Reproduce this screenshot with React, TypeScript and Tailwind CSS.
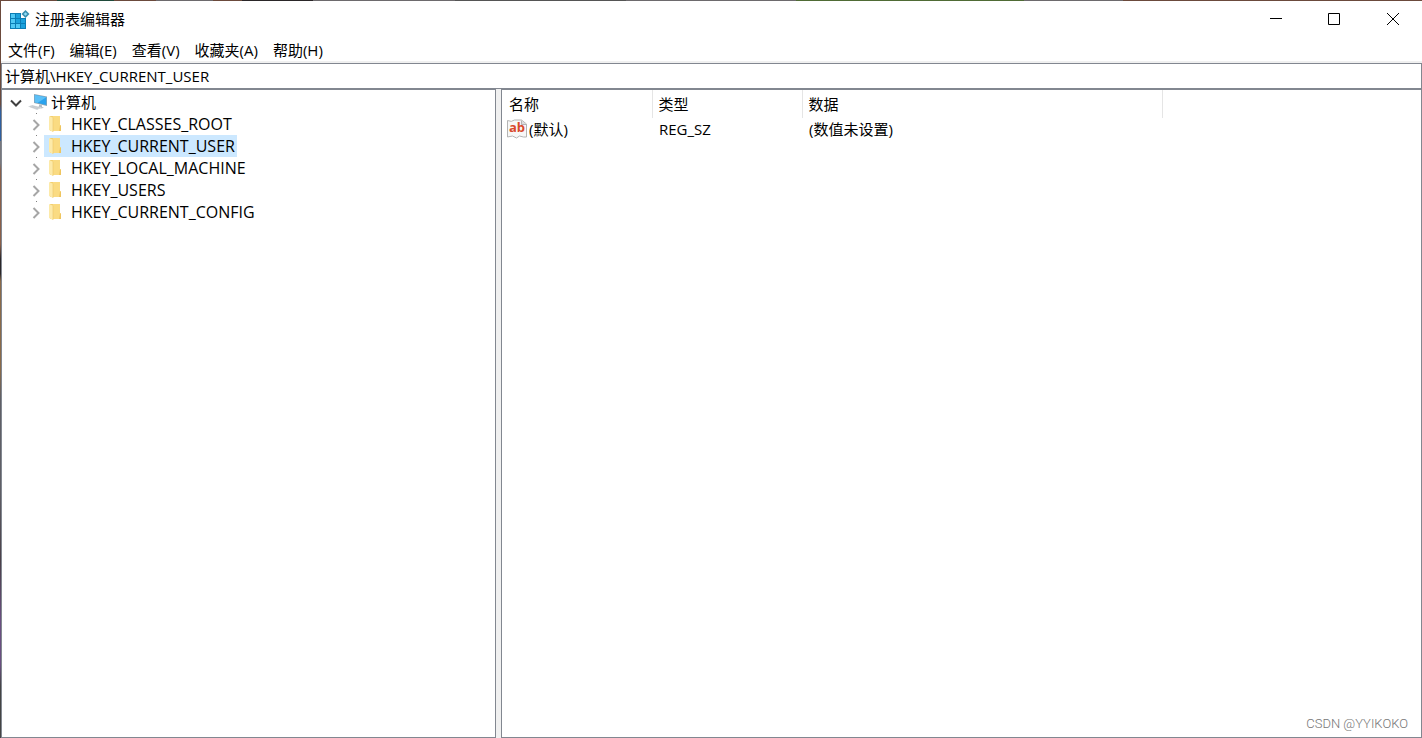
import { useState } from "react";

const menus = ["文件(F)", "编辑(E)", "查看(V)", "收藏夹(A)", "帮助(H)"];

const hives = [
  "HKEY_CLASSES_ROOT",
  "HKEY_CURRENT_USER",
  "HKEY_LOCAL_MACHINE",
  "HKEY_USERS",
  "HKEY_CURRENT_CONFIG",
];

const values = [{ name: "(默认)", type: "REG_SZ", data: "(数值未设置)" }];

function RegeditIcon() {
  return (
    <svg width="21" height="20" viewBox="0 0 21 20" aria-hidden="true">
      <path d="M1 3h11v5h5v11H1z" fill="#0b7db5" />
      <path d="M2 4h4v4H2zM2 9h4v4H2zM2 14h4v4H2zM7 14h4v4H7z" fill="#4fc8f4" />
      <path d="M7 4h4v4H7zM7 9h4v4H7zM12 9h4v4h-4zM12 14h4v4h-4z" fill="#1ba1dc" />
      <path d="M16.500 0l4 4-4 4-4-4z" fill="#3a8fb0" />
      <path d="M16.500 2.200l1.800 1.800-1.800 1.800L14.700 4z" fill="#8fdcf7" />
    </svg>
  );
}

function ComputerIcon() {
  return (
    <svg width="20" height="18" viewBox="0 0 20 18" className="shrink-0" aria-hidden="true">
      <path d="M6 1l13 2.500v9.500L6 10z" fill="#8ea6b5" />
      <path d="M6.800 1.900l11.500 2.300v7.800L6.800 9.300z" fill="#2ba3ee" />
      <path d="M6.800 1.900l11.500 2.300-9 5.700-2.500-.600z" fill="#5cc0f7" />
      <path d="M11 11.500l3 .700v1.800l2 .800-3 .700-4-1.200 2-.700z" fill="#b5bcc2" />
      <path d="M0 13.500l4-1.500 10 2.500-5 2.500z" fill="#d5d9dc" />
      <path d="M2 13.600l8 2.200M4 12.900l8 2.100" stroke="#b9bfc4" strokeWidth=".6" />
    </svg>
  );
}

function FolderIcon() {
  return (
    <svg width="14" height="18" viewBox="0 0 14 18" className="shrink-0" aria-hidden="true">
      <path d="M1 1h10v9.500h1V16H1z" fill="#f3cf70" />
      <path d="M4 1h7v9.500h1V16H4z" fill="#fadb82" />
      <path d="M11 10.500h1V16h-2z" fill="#efc55f" />
      <path d="M0 1l4 1.800V17l-4-2z" fill="#fdeaa9" />
      <path d="M4 2.800V17" stroke="#ecc768" strokeWidth=".6" />
    </svg>
  );
}

function StringValueIcon() {
  return (
    <svg width="20" height="20" viewBox="0 0 20 20" className="shrink-0" aria-hidden="true">
      <path d="M.5 1.500q4 2 7-.500h7l5 4v13l-3 0-4-1-3 2-4-2-5 1z" fill="#f7f7f7" stroke="#b4b4b4" />
      <path d="M14.500 1.500v4h5" fill="#dcdcdc" stroke="#b4b4b4" />
      <text x="2" y="13" fontSize="13" fontWeight="700" fill="#d9482b" fontFamily="Open Sans, sans-serif">ab</text>
    </svg>
  );
}

function Chevron({ open }: { open?: boolean }) {
  return open ? (
    <svg width="12" height="8" viewBox="0 0 12 8" fill="none" stroke="#404040" strokeWidth="2" aria-hidden="true">
      <path d="M1 1.500l5 5 5-5" />
    </svg>
  ) : (
    <svg width="8" height="12" viewBox="0 0 8 12" fill="none" stroke="#a6a6a6" strokeWidth="2" aria-hidden="true">
      <path d="M1.500 1l5 5-5 5" />
    </svg>
  );
}

function TitleBar() {
  return (
    <header className="flex h-[37px] items-center pl-2">
      <RegeditIcon />
      <h1 className="flex-1 pb-0.5 pl-[5px]">注册表编辑器</h1>
      <div className="flex h-full pb-0.5">
        <button aria-label="最小化" className="flex w-[58px] items-center justify-center">
          <svg width="12" height="12" stroke="#000" fill="none"><path d="M0 5.500h12" /></svg>
        </button>
        <button aria-label="最大化" className="flex w-[58px] items-center justify-center">
          <svg width="12" height="12" stroke="#000" fill="none"><path d="M.5.500h11v11H.5z" /></svg>
        </button>
        <button aria-label="关闭" className="flex w-[59px] items-center justify-center">
          <svg width="12" height="12" stroke="#000" fill="none"><path d="M0 0l12 12M12 0L0 12" /></svg>
        </button>
      </div>
    </header>
  );
}

function KeyTree({ selected, onSelect }: { selected: string; onSelect: (key: string) => void }) {
  return (
    <nav aria-label="注册表项" className="w-[495px] shrink-0 border border-[#828790] bg-white pt-px">
      <div className="flex h-[22px] items-center pl-2">
        <button aria-label="折叠" className="flex w-3 justify-center pt-0.5"><Chevron open /></button>
        <button className="flex items-center gap-[3px] pl-1.5">
          <ComputerIcon />
          计算机
        </button>
      </div>
      <ul>
        {hives.map((key) => (
          <li key={key} className="flex h-[22px] pl-7">
            <button aria-label={"展开 " + key} className="relative flex w-[14px] items-center pt-0.5 pl-0.5">
              <span className="absolute top-0 left-[6px] size-px bg-[#808080]" />
              <Chevron />
            </button>
            <button
              onClick={() => onSelect(key)}
              className={
                key === selected
                  ? "flex items-center gap-2 bg-[#cce8ff] pr-0.5 pl-[5px] text-base leading-5"
                  : "flex items-center gap-2 pr-0.5 pl-[5px] text-base leading-5"
              }
            >
              <FolderIcon />
              {key}
            </button>
          </li>
        ))}
      </ul>
    </nav>
  );
}

function ValueList() {
  return (
    <main className="min-w-0 flex-1 border border-[#828790] bg-white">
      <table className="w-full table-fixed border-collapse text-left">
        <colgroup>
          <col className="w-[150px]" />
          <col className="w-[150px]" />
          <col className="w-[360px]" />
          <col />
        </colgroup>
        <thead>
          <tr className="h-7">
            <th className="border-r border-[#e5e5e5] p-0 pl-[7px] font-normal">名称</th>
            <th className="border-r border-[#e5e5e5] p-0 pl-1.5 font-normal">类型</th>
            <th className="border-r border-[#e5e5e5] p-0 pl-1.5 font-normal">数据</th>
            <td />
          </tr>
        </thead>
        <tbody>
          {values.map((v) => (
            <tr key={v.name} className="h-[22px]">
              <td className="p-0 pl-[5px]">
                <div className="flex items-center gap-0.5">
                  <StringValueIcon />
                  {v.name}
                </div>
              </td>
              <td className="p-0 pl-[7px]">{v.type}</td>
              <td className="p-0 pl-[7px]">{v.data}</td>
              <td />
            </tr>
          ))}
        </tbody>
      </table>
    </main>
  );
}

export default function App() {
  const [selected, setSelected] = useState("HKEY_CURRENT_USER");

  return (
    <div className="flex h-screen flex-col bg-white font-['Open_Sans','Noto_Sans_CJK_SC',sans-serif] text-[15px] leading-5 text-black">
      {/* desktop showing through at the window edges */}
      <div className="h-px shrink-0 bg-[linear-gradient(90deg,#6b4a3c_0_4%,#1f4a3a_4%_8%,#6b4a3c_8%_11%,#6d6a6d_11%_15%,#6b4a3c_15%_17%,#2a2628_17%_22%,#6d6a6d_22%_32%,#555555_32%_44%,#6d6a6d_44%_56%,#4f6b35_56%_72%,#6d6a6d_72%_79%,#6b4a3c_79%)]" />
      <div className="flex min-h-0 flex-1">
        <div className="w-px shrink-0 bg-[linear-gradient(180deg,#6b4a3c_0_14%,#2f5f9f_15%_19%,#77777c_19%_22%,#8a5f48_23%_33%,#2a2628_35%_37%,#8a6a48_38%_50%,#5f5f66_54%_66%,#4a4048_76%,#6a4f80_84%_90%,#444444_93%)]" />
        <div className="relative flex min-w-0 flex-1 flex-col">
          <TitleBar />
          <div className="flex h-[23px] items-center gap-[15px] pl-[7px]">
            {menus.map((m) => (
              <button key={m}>{m}</button>
            ))}
          </div>
          <div className="bg-[#f0f0f0] pt-0.5">
            <input
              aria-label="地址"
              value={"计算机\\" + selected}
              readOnly
              className="block h-[26px] w-full border border-[#828790] bg-white px-[3px] pb-0.5 outline-none"
            />
          </div>
          <div className="flex min-h-0 flex-1 gap-[5px] bg-[#f0f0f0]">
            <KeyTree selected={selected} onSelect={setSelected} />
            <ValueList />
          </div>
          <span className="absolute right-3.5 bottom-1.5 font-['Roboto',sans-serif] text-[13px] leading-4 font-light text-[#777]">
            CSDN @YYIKOKO
          </span>
        </div>
      </div>
    </div>
  );
}
